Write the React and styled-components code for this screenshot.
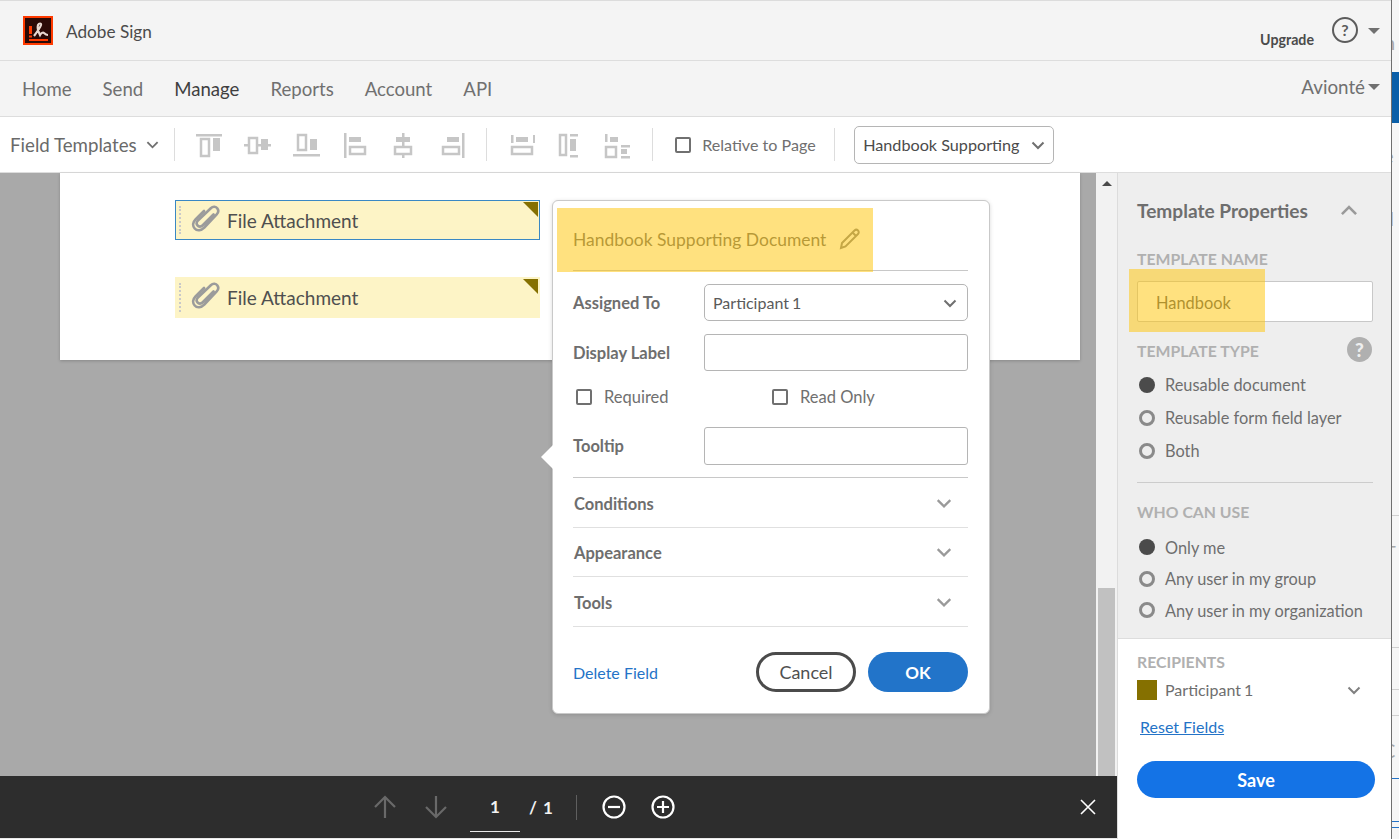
import React from 'react';
import styled, { createGlobalStyle } from 'styled-components';

const GlobalStyle = createGlobalStyle`
    html, body { margin: 0; padding: 0; height: 100%; overflow: hidden; }
    body { font-family: "Lato", "Liberation Sans", sans-serif; background: #fff; }
`;

const Screen = styled.div`
    display: flex;
    width: 1399px;
    height: 839px;
    overflow: hidden;
`;
const AppFrame = styled.div`
    display: flex;
    flex-direction: column;
    width: 1391px;
    flex: none;
    border-top: 1px solid #dcdcdc;
    box-sizing: border-box;
`;
const BehindPage = styled.div`
    flex: 1;
    display: flex;
    flex-direction: column;
    border-left: 1px solid #6f6f6f;
    background: #f6f6f6;
    overflow: hidden;
`;
const BehindRow = styled.div`
    flex: none;
    box-sizing: border-box;
    height: ${p => p.$h}px;
    background: ${p => p.$bg || 'transparent'};
    border-bottom: ${p => p.$line ? `1px solid ${p.$line}` : 'none'};
    color: #a8a8a8;
    font-size: 20px;
    line-height: ${p => p.$h}px;
    white-space: nowrap;
    margin-left: ${p => p.$shift || 0}px;
`;

const TopBar = styled.div`
    flex: none;
    display: flex;
    align-items: center;
    height: 59px;
    padding: 0 11px 0 23px;
    background: #f4f4f4;
    border-bottom: 1px solid #dddddd;
`;
const Logo = styled.svg`
    width: 30px;
    height: 29px;
    flex: none;
`;
const BrandName = styled.span`
    margin: 2px 0 0 13px;
    font-size: 17.2px;
    color: #4b4b4b;
`;
const TopRight = styled.div`
    margin-left: auto;
    display: flex;
    align-items: center;
`;
const Upgrade = styled.span`
    font-size: 14.2px;
    font-weight: 700;
    color: #4b4b4b;
    margin: 18px 18px 0 0;
`;
const HelpRing = styled.span`
    display: flex;
    align-items: center;
    justify-content: center;
    width: 22px;
    height: 22px;
    border: 2px solid #5c5c5c;
    border-radius: 50%;
    font-size: 16px;
    font-weight: 700;
    color: #5c5c5c;
    margin-bottom: 2px;
`;
const Caret = styled.span`
    display: inline-block;
    width: 0;
    height: 0;
    border-left: 6px solid transparent;
    border-right: 6px solid transparent;
    border-top: 6px solid #707070;
    margin-left: ${p => p.$gap || 6}px;
`;

const NavBar = styled.nav`
    flex: none;
    display: flex;
    align-items: center;
    gap: 31px;
    height: 55px;
    padding: 0 11px 0 22px;
    background: #f4f4f4;
    border-bottom: 1px solid #dddddd;
`;
const NavLink = styled.a`
    font-size: 18.6px;
    color: ${p => p.$active ? '#3f3f3f' : '#707070'};
`;
const Account = styled.div`
    margin-left: auto;
    display: flex;
    align-items: center;
    font-size: 18.8px;
    color: #707070;
    margin-top: -4px;
`;

const ToolBar = styled.div`
    flex: none;
    display: flex;
    align-items: center;
    height: 55px;
    background: #ffffff;
    border-bottom: 1px solid #dddddd;
    white-space: nowrap;
`;
const TemplateMenu = styled.div`
    flex: none;
    width: 164px;
    margin-right: -10px;
    box-sizing: border-box;
    padding: 0 5px 0 10px;
    display: flex;
    align-items: center;
    justify-content: space-between;
    font-size: 18.7px;
    color: #6a6a6a;
`;
const ToolDivider = styled.span`
    flex: none;
    width: 1px;
    height: 33px;
    background: #dddddd;
    margin: 0 20px;
`;
const IconGroup = styled.div`
    display: flex;
    gap: 20.6px;
`;
const ToolGlyph = styled.svg`
    width: 28px;
    height: 28px;
    flex: none;
    fill: #c6c6c6;
`;
const RelativeCheck = styled.label`
    flex: none;
    width: 141px;
    box-sizing: border-box;
    padding-left: 2px;
    display: flex;
    align-items: center;
    gap: 11px;
    font-size: 16.1px;
    color: #707070;
`;
const CheckBox = styled.span`
    flex: none;
    width: 16px;
    height: 16px;
    box-sizing: border-box;
    border: 2px solid #707070;
    border-radius: 2px;
    background: #fff;
`;
const TemplateSelect = styled.div`
    flex: none;
    width: 200px;
    height: 38px;
    margin-left: -1px;
    box-sizing: border-box;
    display: flex;
    align-items: center;
    justify-content: space-between;
    padding: 0 8px 0 8px;
    border: 1px solid #b5b5b5;
    border-radius: 5px;
    font-size: 16.2px;
    color: #4b4b4b;
`;

const Workspace = styled.div`
    flex: 1;
    min-height: 0;
    display: flex;
`;
const ViewerColumn = styled.div`
    position: relative;
    flex: none;
    width: 1117px;
    display: flex;
    flex-direction: column;
`;
const ViewerBody = styled.div`
    flex: 1;
    min-height: 0;
    display: flex;
`;
const Canvas = styled.div`
    flex: 1;
    background: #a9a9a9;
    padding: 0 16px 0 60px;
`;
const DocPage = styled.div`
    display: flex;
    flex-direction: column;
    gap: 37px;
    height: 187px;
    box-sizing: border-box;
    padding: 27px 0 0 115px;
    background: #fff;
    box-shadow: 0 1px 3px rgba(0, 0, 0, .2);
`;
const Field = styled.div`
    position: relative;
    display: flex;
    align-items: center;
    width: 365px;
    height: ${p => p.$selected ? 40 : 41}px;
    box-sizing: border-box;
    padding: 0 0 ${p => p.$selected ? 0 : 1}px 15px;
    background: #fdf4c6;
    border: 1px solid ${p => p.$selected ? '#3a88c4' : '#fdf4c6'};
    font-size: 19px;
    color: #4f4f4f;
    &::before {
        content: "";
        position: absolute;
        left: 3px;
        top: 5px;
        bottom: 5px;
        border-left: 2px dotted #c9c9c9;
    }
    &::after {
        content: "";
        position: absolute;
        right: 1px;
        top: 1px;
        border-top: 15px solid #857000;
        border-left: 15px solid transparent;
    }
`;
const FieldText = styled.span`
    margin-left: 6px;
`;
const ScrollTrack = styled.div`
    flex: none;
    width: 21px;
    display: flex;
    flex-direction: column;
    align-items: center;
    background: #f2f2f2;
`;
const ScrollArrow = styled.span`
    width: 0;
    height: 0;
    margin-top: 8px;
    border-left: 5px solid transparent;
    border-right: 5px solid transparent;
    border-bottom: 5px solid #4a4a4a;
`;
const ScrollThumb = styled.div`
    width: 17px;
    margin-top: auto;
    height: 188px;
    background: #c1c1c1;
`;

const PagerBar = styled.div`
    flex: none;
    display: flex;
    align-items: center;
    height: 62px;
    padding: 0 16px 0 372px;
    background: #2d2d2d;
    color: #f2f2f2;
    border-bottom: 1px solid #e8e8e8;
`;
const PagerIcon = styled.svg`
    width: 26px;
    height: 26px;
    flex: none;
    fill: none;
    stroke: ${p => p.$dim ? '#696969' : '#ffffff'};
    stroke-width: ${p => p.$thin ? 1.6 : 2.2};
    margin-right: ${p => p.$gap || 0}px;
`;
const PageInput = styled.div`
    width: 50px;
    height: 49px;
    box-sizing: border-box;
    border-bottom: 1px solid #e8e8e8;
    margin: 0 9px 0 21px;
    text-align: center;
    font-size: 17px;
    font-weight: 700;
    line-height: 47px;
`;
const PageTotal = styled.span`
    font-size: 17px;
    font-weight: 700;
    word-spacing: 2px;
`;
const PagerDivider = styled.span`
    width: 1px;
    height: 25px;
    background: #5f5f5f;
    margin: 0 24px 0 23px;
`;
const CloseSlot = styled.div`
    margin-left: auto;
    display: flex;
`;

const Popover = styled.div`
    position: absolute;
    left: 552px;
    top: 27px;
    width: 438px;
    box-sizing: border-box;
    padding: 0 21px 21px 20px;
    background: #fff;
    border: 1px solid #c9c9c9;
    border-radius: 6px;
    box-shadow: 0 1px 4px rgba(0, 0, 0, .15);
    &::before {
        content: "";
        position: absolute;
        left: -12px;
        top: 244px;
        border-top: 12px solid transparent;
        border-bottom: 12px solid transparent;
        border-right: 12px solid #fff;
    }
`;
const PopTitle = styled.div`
    display: flex;
    align-items: center;
    gap: 12px;
    height: 70px;
    box-sizing: border-box;
    padding-top: 7px;
    border-bottom: 1px solid #c8c8c8;
    font-size: 17.45px;
    color: #6e6e6e;
`;
const Highlight = styled.div`
    position: absolute;
    left: ${p => p.$x}px;
    top: ${p => p.$y}px;
    width: ${p => p.$w}px;
    height: ${p => p.$h}px;
    background: rgba(255, 196, 0, .5);
    pointer-events: none;
`;
const FormRow = styled.div`
    display: flex;
    align-items: center;
    margin-top: ${p => p.$flush ? 0 : 13}px;
`;
const FormLabel = styled.label`
    width: 131px;
    flex: none;
    font-size: 16.5px;
    font-weight: 700;
    color: #6e6e6e;
`;
const TextBox = styled.input`
    flex: 1;
    min-width: 0;
    height: ${p => p.$h || 37}px;
    box-sizing: border-box;
    border: 1px solid #b5b5b5;
    border-radius: 3px;
    background: #fff;
    outline: none;
`;
const SelectBox = styled.div`
    flex: 1;
    height: 37px;
    box-sizing: border-box;
    display: flex;
    align-items: center;
    justify-content: space-between;
    padding: 0 10px 0 8px;
    border: 1px solid #b5b5b5;
    border-radius: 5px;
    font-size: 16px;
    word-spacing: -1px;
    color: #5a5a5a;
`;
const CheckRow = styled.div`
    display: flex;
    height: 56px;
    padding: 0 0 4px 3px;
    align-items: center;
    box-sizing: border-box;
`;
const CheckItem = styled.label`
    display: flex;
    align-items: center;
    gap: 12px;
    width: 198px;
    font-size: 16.5px;
    color: #707070;
`;
const Accordion = styled.div`
    margin-top: 12px;
    border-top: 1px solid #c8c8c8;
`;
const AccordionRow = styled.div`
    display: flex;
    align-items: center;
    justify-content: space-between;
    height: ${p => p.$h}px;
    box-sizing: content-box;
    padding: 0 16px 0 1px;
    border-bottom: 1px solid #e0e0e0;
    font-size: 16.5px;
    font-weight: 700;
    color: #6e6e6e;
`;
const AccordionName = styled.span`
    padding-top: 2px;
`;
const PopFooter = styled.div`
    display: flex;
    align-items: center;
    margin-top: 25px;
`;
const LinkText = styled.a`
    font-size: 16px;
    color: #2473c7;
    margin-right: auto;
`;
const PillButton = styled.button`
    width: 100px;
    height: 40px;
    margin-left: 12px;
    border-radius: 20px;
    box-sizing: border-box;
    border: ${p => p.$primary ? 'none' : '3px solid #4b4b4b'};
    background: ${p => p.$primary ? '#2274c9' : '#fff'};
    color: ${p => p.$primary ? '#fff' : '#505050'};
    font-family: inherit;
    font-size: ${p => p.$primary ? 17 : 18}px;
    font-weight: ${p => p.$primary ? 700 : 400};
`;

const SidePanel = styled.aside`
    position: relative;
    flex: 1;
    display: flex;
    flex-direction: column;
    border-left: 1px solid #dcdcdc;
    background: #fff;
`;
const PanelTop = styled.div`
    flex: none;
    height: 466px;
    box-sizing: border-box;
    padding: 0 18px 0 19px;
    background: #eeeeee;
    border-bottom: 1px solid #dddddd;
`;
const PanelTitle = styled.div`
    display: flex;
    align-items: center;
    justify-content: space-between;
    height: 76px;
    padding: 0 15px 1px 0;
    box-sizing: border-box;
    font-size: 19.1px;
    font-weight: 700;
    color: #6e6e6e;
`;
const SectionLabel = styled.div`
    display: flex;
    align-items: center;
    justify-content: space-between;
    height: 20px;
    box-sizing: border-box;
    padding-bottom: 2px;
    margin-top: ${p => p.$top || 0}px;
    font-size: 15.8px;
    font-weight: 700;
    color: #b0b0b0;
    text-transform: uppercase;
`;
const HelpBadge = styled.span`
    display: flex;
    align-items: center;
    justify-content: center;
    width: 25px;
    height: 25px;
    margin: -2px 1px 0 0;
    border-radius: 50%;
    background: #b0b0b0;
    color: #eeeeee;
    font-size: 19px;
    font-weight: 900;
    text-transform: none;
`;
const NameInput = styled.div`
    height: 41px;
    box-sizing: border-box;
    margin-top: 12px;
    display: flex;
    align-items: center;
    padding: 1px 0 0 18px;
    background: #fff;
    border: 1px solid #c8c8c8;
    border-radius: 2px;
    font-size: 16.4px;
    color: #5f5f5f;
`;
const RadioGroup = styled.div`
    margin-top: ${p => p.$top}px;
`;
const RadioRow = styled.label`
    display: flex;
    align-items: center;
    gap: 10px;
    height: ${p => p.$h}px;
    padding-left: 2px;
    font-size: 16.35px;
    color: #6e6e6e;
`;
const RadioDot = styled.span`
    flex: none;
    width: 16px;
    height: 16px;
    box-sizing: border-box;
    border-radius: 50%;
    background: ${p => p.$on ? '#4b4b4b' : 'transparent'};
    border: ${p => p.$on ? 'none' : '3px solid #8a8a8a'};
`;
const PanelDivider = styled.div`
    height: 1px;
    margin-top: 15px;
    background: #cccccc;
`;
const PanelBottom = styled.div`
    flex: 1;
    padding: 13px 16px 0 19px;
`;
const Recipient = styled.div`
    display: flex;
    align-items: center;
    margin-top: 8px;
    padding-right: 14px;
    font-size: 16px;
    word-spacing: -1px;
    color: #6e6e6e;
`;
const RecipientName = styled.span`
    margin-top: -2px;
`;
const Swatch = styled.span`
    width: 20px;
    height: 20px;
    margin-right: 8px;
    background: #857000;
`;
const ResetLink = styled.a`
    display: block;
    margin: 17px 0 0 3px;
    width: fit-content;
    font-size: 16px;
    line-height: 20px;
    color: #2473c7;
    text-decoration: underline;
`;
const SaveButton = styled.button`
    display: block;
    width: 238px;
    height: 37px;
    margin-top: 24px;
    border: none;
    border-radius: 19px;
    background: #1473e6;
    color: #fff;
    font-family: inherit;
    font-size: 18px;
    font-weight: 700;
`;
const ChevronSvg = styled.svg`
    flex: none;
    width: ${p => p.$size || 14}px;
    height: ${p => p.$size || 14}px;
    fill: none;
    stroke: ${p => p.$color || '#707070'};
    stroke-width: ${p => p.$weight || 2};
    transform: ${p => p.$up ? 'rotate(180deg)' : 'none'};
`;
const Spacer = styled.span`
    margin-left: auto;
`;

const Chevron = (props) => (
    <ChevronSvg viewBox="0 0 14 14" {...props}>
        <path d="M1.5 4.5 7 10l5.5-5.5" />
    </ChevronSvg>
);

const PaperClip = () => (
    <svg width="30" height="30" viewBox="0 0 30 30" fill="none" stroke="#9b9b9b" strokeWidth="2.6" strokeLinecap="round">
        <path d="M22.5 9.5 11.5 20.5c-1.6 1.6-3.8 1.4-5-.1-1.2-1.5-1-3.4.4-4.8L19.8 3.2c2.300-2.200 5.300-1.600 6.600.2 1.300 1.900 1.100 4.100-.7 5.900L13.300 22.700c-3.100 3.100-7.300 3.500-9.600.8-2.400-2.800-1.900-6.500.8-9.200L13 6" />
    </svg>
);

// rect = [x, y, w, h] relative to a 28px tile, bars are solid and outlines hollow
const toolIcons = [
    { solid: [[1, 3, 26, 2.5], [18, 7, 7, 13]], open: [[6, 8, 8, 17]] },
    { solid: [[0, 13, 4, 2.5], [14, 13, 3, 2.5], [24, 13, 3, 2.5], [17, 8, 7, 11]], open: [[5, 7, 8, 15]] },
    { solid: [[1, 23, 27, 2.5], [18, 8, 7, 11]], open: [[6, 4, 8, 15]] },
    { solid: [[3, 2, 2.5, 25], [8, 6, 12, 5]], open: [[9, 16, 15, 7]] },
    { solid: [[13, 2, 2.5, 4], [13, 11, 2.5, 4], [13, 23, 2.5, 4], [7, 6, 14, 5]], open: [[6, 16, 16, 7]] },
    { solid: [[24, 2, 2.5, 25], [9, 6, 12, 5]], open: [[5, 16, 16, 7]] },
    { solid: [[4, 4, 2.5, 8], [26, 4, 2.5, 8], [9, 6, 12, 5]], open: [[5, 16, 20, 7]] },
    { solid: [[14, 3, 8, 2.5], [14, 24, 8, 2.5], [14, 8, 6, 12]], open: [[4, 4, 6, 20]] },
    { solid: [[1, 3, 2.5, 8], [6, 6, 8, 5], [17, 14, 9, 2.5], [17, 25, 9, 2.5], [17, 18, 6, 5]], open: [[2, 16, 10, 10]] },
];

const ToolIcon = ({ solid, open }) => (
    <ToolGlyph viewBox="0 0 28 28">
        {solid.map((r, i) => <rect key={i} x={r[0]} y={r[1]} width={r[2]} height={r[3]} />)}
        {open.map((r, i) => <rect key={i} x={r[0]} y={r[1]} width={r[2]} height={r[3]} fill="none" stroke="#c6c6c6" strokeWidth="2.5" />)}
    </ToolGlyph>
);

const navItems = ['Home', 'Send', 'Manage', 'Reports', 'Account', 'API'];

const behindRows = [
    { h: 30 },
    { h: 24, text: 'h', shift: -8 },
    { h: 18 },
    { h: 51, bg: '#0b5fa8' },
    { h: 20 },
    { h: 24, text: 'e', shift: -9 },
    { h: 39 },
    { h: 24, text: 'N', shift: -13 },
    { h: 286, line: '#d0d0d0' },
    { h: 24 },
    { h: 24, text: 'T', shift: -8 },
    { h: 84, line: '#d0d0d0' },
    { h: 42, line: '#d0d0d0' },
    { h: 26, line: '#d0d0d0' },
    { h: 22 },
    { h: 24, text: 'C', shift: -10 },
    { h: 17, line: '#2473c7' },
    { h: 43, line: '#2473c7' },
    { h: 6, line: '#2473c7' },
];

class App extends React.Component {
    renderRadio(label, on, h) {
        return (
            <RadioRow key={label} $h={h}>
                <RadioDot $on={on} />
                {label}
            </RadioRow>
        );
    }
    render() {
        return (
            <Screen>
                <GlobalStyle />
                <AppFrame>
                    <TopBar>
                        <Logo viewBox="0 0 30 29">
                            <rect x="1" y="1" width="28" height="27" fill="#2b0a06" stroke="#ff3a00" strokeWidth="2" />
                            <rect x="6" y="10" width="3" height="8" fill="#ff3a00" />
                            <rect x="6" y="19.500" width="3" height="2" fill="#ff3a00" />
                            <rect x="6" y="23" width="19" height="2" fill="#ff3a00" />
                            <path d="M11 20c3-4 6-8 7-11 .5-2-2-2-3 0-1 3 1 8 2 10 1-2 3-3 4-2 1 1 2 2 4 2" fill="none" stroke="#e8d8d0" strokeWidth="2.200" />
                        </Logo>
                        <BrandName>Adobe Sign</BrandName>
                        <TopRight>
                            <Upgrade>Upgrade</Upgrade>
                            <HelpRing>?</HelpRing>
                            <Caret $gap={10} />
                        </TopRight>
                    </TopBar>
                    <NavBar>
                        {navItems.map(item => <NavLink key={item} $active={item === 'Manage'}>{item}</NavLink>)}
                        <Account>Avionté<Caret $gap={3} /></Account>
                    </NavBar>
                    <ToolBar>
                        <TemplateMenu>Field Templates<Chevron $size={13} /></TemplateMenu>
                        <ToolDivider />
                        <IconGroup>
                            {toolIcons.slice(0, 6).map((icon, i) => <ToolIcon key={i} {...icon} />)}
                        </IconGroup>
                        <ToolDivider />
                        <IconGroup>
                            {toolIcons.slice(6).map((icon, i) => <ToolIcon key={i} {...icon} />)}
                        </IconGroup>
                        <ToolDivider />
                        <RelativeCheck><CheckBox />Relative to Page</RelativeCheck>
                        <ToolDivider />
                        <TemplateSelect>Handbook Supporting<Chevron $size={14} /></TemplateSelect>
                    </ToolBar>
                    <Workspace>
                        <ViewerColumn>
                            <ViewerBody>
                                <Canvas>
                                    <DocPage>
                                        <Field $selected><PaperClip /><FieldText>File Attachment</FieldText></Field>
                                        <Field><PaperClip /><FieldText>File Attachment</FieldText></Field>
                                    </DocPage>
                                </Canvas>
                                <ScrollTrack>
                                    <ScrollArrow />
                                    <ScrollThumb />
                                </ScrollTrack>
                            </ViewerBody>
                            <PagerBar>
                                <PagerIcon $dim $gap={25} viewBox="0 0 26 26"><path d="M13 24V3M3 13 13 3l10 10" /></PagerIcon>
                                <PagerIcon $dim viewBox="0 0 26 26"><path d="M13 2v21M3 13l10 10 10-10" /></PagerIcon>
                                <PageInput>1</PageInput>
                                <PageTotal>/ 1</PageTotal>
                                <PagerDivider />
                                <PagerIcon $gap={23} viewBox="0 0 26 26"><circle cx="13" cy="13" r="10.500" /><path d="M7 13h12" /></PagerIcon>
                                <PagerIcon viewBox="0 0 26 26"><circle cx="13" cy="13" r="10.500" /><path d="M7 13h12M13 7v12" /></PagerIcon>
                                <CloseSlot>
                                    <PagerIcon $thin viewBox="0 0 26 26"><path d="M6 6l14 14M20 6 6 20" /></PagerIcon>
                                </CloseSlot>
                            </PagerBar>
                            <Popover>
                                <PopTitle>
                                    Handbook Supporting Document
                                    <svg width="24" height="24" viewBox="0 0 24 24" fill="none" stroke="#8a8a8a" strokeWidth="2">
                                        <path d="M4 16 16.500 3.500c1-1 2.500-1 3.500 0s1 2.500 0 3.500L7.500 19.500 3 21z M14.500 5.500l4 4" />
                                    </svg>
                                </PopTitle>
                                <FormRow>
                                    <FormLabel>Assigned To</FormLabel>
                                    <SelectBox>Participant 1<Chevron $size={14} /></SelectBox>
                                </FormRow>
                                <FormRow>
                                    <FormLabel>Display Label</FormLabel>
                                    <TextBox readOnly />
                                </FormRow>
                                <CheckRow>
                                    <CheckItem><CheckBox />Required</CheckItem>
                                    <CheckItem><CheckBox />Read Only</CheckItem>
                                </CheckRow>
                                <FormRow $flush>
                                    <FormLabel>Tooltip</FormLabel>
                                    <TextBox readOnly $h={38} />
                                </FormRow>
                                <Accordion>
                                    <AccordionRow $h={49}><AccordionName>Conditions</AccordionName><Chevron $size={16} $color="#9a9a9a" /></AccordionRow>
                                    <AccordionRow $h={48}><AccordionName>Appearance</AccordionName><Chevron $size={16} $color="#9a9a9a" /></AccordionRow>
                                    <AccordionRow $h={49}><AccordionName>Tools</AccordionName><Chevron $size={16} $color="#9a9a9a" /></AccordionRow>
                                </Accordion>
                                <PopFooter>
                                    <LinkText>Delete Field</LinkText>
                                    <PillButton>Cancel</PillButton>
                                    <PillButton $primary>OK</PillButton>
                                </PopFooter>
                                <Highlight $x={4} $y={7} $w={316} $h={64} />
                            </Popover>
                        </ViewerColumn>
                        <SidePanel>
                            <PanelTop>
                                <PanelTitle>Template Properties<Chevron $up $size={18} $color="#9a9a9a" /></PanelTitle>
                                <SectionLabel>Template Name</SectionLabel>
                                <NameInput>Handbook</NameInput>
                                <SectionLabel $top={19}>Template Type<HelpBadge>?</HelpBadge></SectionLabel>
                                <RadioGroup $top={7}>
                                    {this.renderRadio('Reusable document', true, 33)}
                                    {this.renderRadio('Reusable form field layer', false, 33)}
                                    {this.renderRadio('Both', false, 33)}
                                </RadioGroup>
                                <PanelDivider />
                                <SectionLabel $top={19}>Who can use</SectionLabel>
                                <RadioGroup $top={9}>
                                    {this.renderRadio('Only me', true, 32)}
                                    {this.renderRadio('Any user in my group', false, 31)}
                                    {this.renderRadio('Any user in my organization', false, 32)}
                                </RadioGroup>
                            </PanelTop>
                            <PanelBottom>
                                <SectionLabel>Recipients</SectionLabel>
                                <Recipient>
                                    <Swatch />
                                    <RecipientName>Participant 1</RecipientName>
                                    <Spacer />
                                    <Chevron $size={14} $color="#808080" />
                                </Recipient>
                                <ResetLink>Reset Fields</ResetLink>
                                <SaveButton>Save</SaveButton>
                            </PanelBottom>
                            <Highlight $x={11} $y={96} $w={136} $h={63} />
                        </SidePanel>
                    </Workspace>
                </AppFrame>
                <BehindPage>
                    {behindRows.map((row, i) => (
                        <BehindRow key={i} $h={row.h} $bg={row.bg} $line={row.line} $shift={row.shift}>{row.text}</BehindRow>
                    ))}
                </BehindPage>
            </Screen>
        );
    }
}

export default App;
